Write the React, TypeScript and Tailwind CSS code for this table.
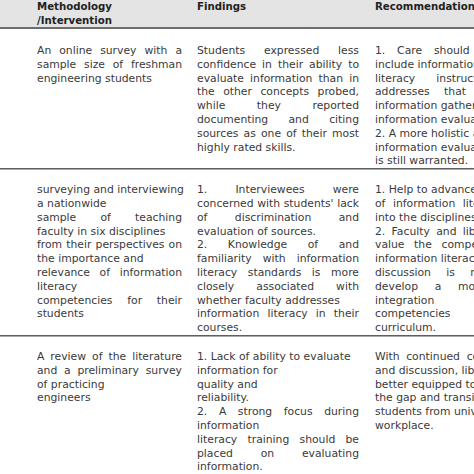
import React from "react";

type L = [string, boolean];

const J = (t: string): L => [t, true];
const S = (t: string): L => [t, false];

function Cell({ lines, w }: { lines: L[]; w: string }) {
  return (
    <div className={`${w} shrink-0`}>
      {lines.map(([t, j], i) => (
        <div
          key={i}
          className={
            j
              ? "whitespace-nowrap text-justify [text-align-last:justify]"
              : "whitespace-nowrap text-left"
          }
        >
          {t}
        </div>
      ))}
    </div>
  );
}

function Row({ cols, pt }: { cols: L[][]; pt: string }) {
  return (
    <div className={`flex pl-[37px] ${pt}`}>
      <Cell lines={cols[0]} w="w-[145px]" />
      <div className="w-[15px] shrink-0" />
      <Cell lines={cols[1]} w="w-[162px]" />
      <div className="w-[16px] shrink-0" />
      <Cell lines={cols[2]} w="w-[162px]" />
    </div>
  );
}

function Sep() {
  return (
    <div className="w-full">
      <div className="h-[1px] bg-[#5f5f5f]" />
      <div className="h-[1px] bg-[#a9a9a9]" />
    </div>
  );
}

export default function App() {
  const row1: L[][] = [
    [J("An online survey with a"), J("sample size of freshman"), S("engineering students")],
    [
      J("Students expressed less"),
      J("confidence in their ability to"),
      J("evaluate information than in"),
      J("the other concepts probed,"),
      J("while they reported"),
      J("documenting and citing"),
      J("sources as one of their most"),
      S("highly rated skills."),
    ],
    [
      J("1. Care should be taken"),
      S("include information"),
      J("literacy instruction that"),
      J("addresses that both the"),
      S("information gathering and the"),
      S("information evaluation."),
      S("2. A more holistic approach to"),
      S("information evaluation"),
      S("is still warranted."),
    ],
  ];
  const row2: L[][] = [
    [
      J("surveying and interviewing"),
      S("a nationwide"),
      J("sample of teaching"),
      S("faculty in six disciplines"),
      J("from their perspectives on"),
      S("the importance and"),
      J("relevance of information"),
      S("literacy"),
      J("competencies for their"),
      S("students"),
    ],
    [
      J("1. Interviewees were"),
      J("concerned with students' lack"),
      J("of discrimination and"),
      S("evaluation of sources."),
      J("2. Knowledge of and"),
      J("familiarity with information"),
      J("literacy standards is more"),
      J("closely associated with"),
      S("whether faculty addresses"),
      J("information literacy in their"),
      S("courses."),
    ],
    [
      S("1. Help to advance the"),
      J("of information literacy skills"),
      S("into the disciplines."),
      J("2. Faculty and librarians too"),
      J("value the competencies of"),
      S("information literacy and"),
      J("discussion is needed to"),
      J("develop a more robust"),
      J("integration of"),
      J("competencies into"),
      S("curriculum."),
    ],
  ];
  const row3: L[][] = [
    [J("A review of the literature"), J("and a preliminary survey"), S("of practicing"), S("engineers")],
    [
      S("1. Lack of ability to evaluate"),
      S("information for"),
      S("quality and"),
      S("reliability."),
      J("2. A strong focus during"),
      S("information"),
      J("literacy training should be"),
      J("placed on evaluating"),
      S("information."),
    ],
    [
      J("With continued collaboration"),
      S("and discussion, librarians are"),
      S("better equipped to bridge"),
      S("the gap and transition"),
      S("students from university to"),
      S("workplace."),
    ],
  ];

  return (
    <div
      className="w-[474px] h-[474px] overflow-hidden bg-white text-[#3a3a3a] text-[10.8px] leading-[13.8px]"
      style={{ fontFamily: '"DejaVu Sans", sans-serif' }}
    >
      <div className="w-[560px]">
        <div className="bg-[#e4e4e4] h-[27px] flex pl-[37px] font-bold text-[10.2px] leading-[14px] text-[#222222]">
          <div className="w-[145px] shrink-0">
            <div>Methodology</div>
            <div>/Intervention</div>
          </div>
          <div className="w-[15px] shrink-0" />
          <div className="w-[162px] shrink-0">Findings</div>
          <div className="w-[16px] shrink-0" />
          <div className="w-[162px] shrink-0">Recommendations</div>
        </div>
        <div className="h-[2px] bg-[#6d6d6d]" />
        <Row cols={row1} pt="pt-[15px]" />
        <Sep />
        <Row cols={row2} pt="pt-[13px]" />
        <Sep />
        <Row cols={row3} pt="pt-[13px]" />
      </div>
    </div>
  );
}
